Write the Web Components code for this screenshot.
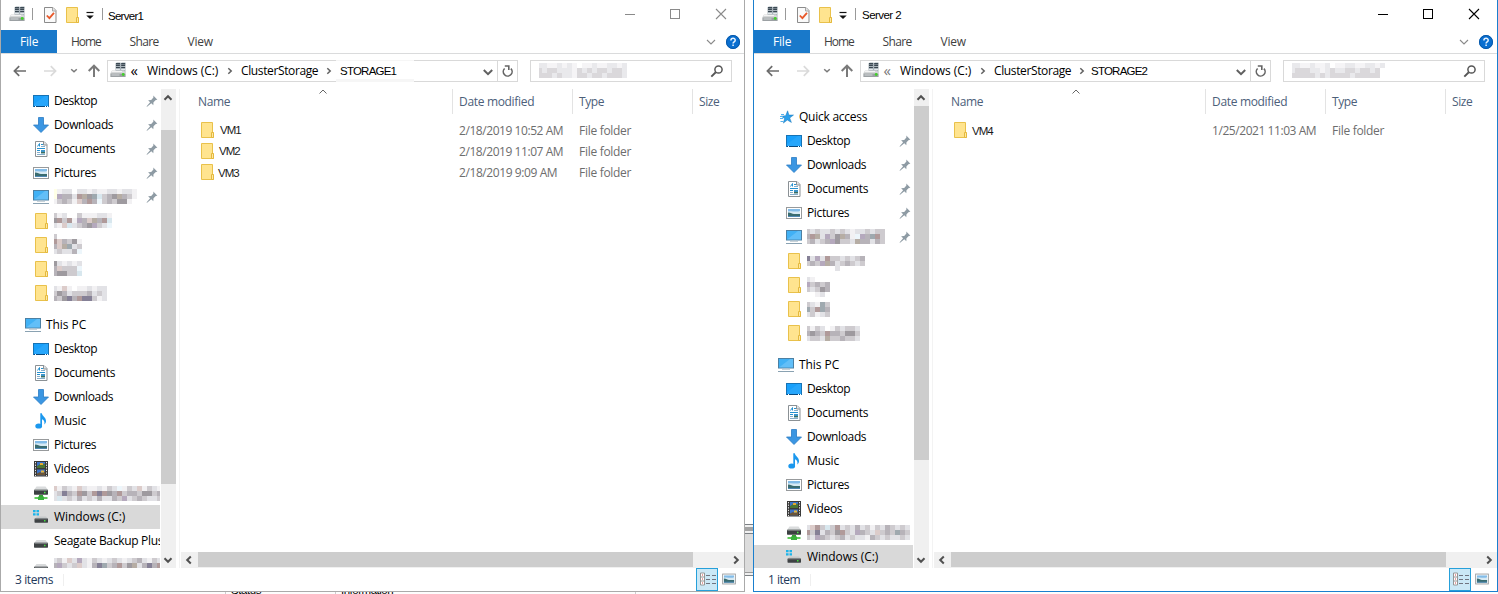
<!DOCTYPE html>
<html lang="en">
<head>
<meta charset="utf-8">
<title>File Explorer</title>
<style>
    body {
        margin: 0;
        width: 1498px;
        height: 594px;
        overflow: hidden;
        background: #fff;
        font: 12px/16px "Open Sans", "Noto Sans", sans-serif;
        color: #000;
    }
    .desktop {
        display: grid;
        grid-template-columns: 745px 8px 745px;
        grid-template-rows: 592px 2px;
    }
    window-strip { grid-column: 1 / 4; }
</style>
</head>
<body>
<div class="desktop">
    <explorer-window id="server1" caption="Server1" caption-width="35" folder="STORAGE1" items="3 items" items-width="38">
    </explorer-window>
    <window-gap></window-gap>
    <explorer-window id="server2" class="active" caption="Server 2" caption-width="39" folder="STORAGE2" items="1 item" items-width="32">
    </explorer-window>
    <window-strip></window-strip>
</div>

<script>
const ICONS = {
    server: `
        <path d="M5.500 1.200 7 .4h3.500v10h-5zM10.500 1.200 12 .4h3.500v10.500h-5z" fill="#a9b3ba"/>
        <path d="M6 1h4v1.600H6zM11.200 1h4v1.600h-4z" fill="#3c4a54"/>
        <path d="M6 3.500h3.900M6 5.500h3.900M11.200 3.500h3.900M11.200 5.500h3.900" stroke="#394650"/>
        <path d="M6 7.500h3.900M11.200 7.500h3.900" stroke="#e4e9ec"/>
        <path d="M2 8.500h12l1.500 2V15H.5v-4z" fill="#d5d7d8"/>
        <path d="M.5 11.500h15V15H.5z" fill="#9ba0a3"/>
        <path d="M2 9.500h10" stroke="#f4f4f4"/><path d="M1.500 13h8" stroke="#d6dadc"/>
        <circle cx="13.200" cy="12.500" r="1.400" fill="#42d02a"/>`,
    check: `
        <path d="M2.500.5h8.500l3 3v12H2.500z" fill="#fafafa" stroke="#8b8b8b"/>
        <path d="M10.500.5v3.500H14" fill="#e6e6e6" stroke="#a5a5a5"/>
        <path d="M4.800 8.500 7.400 11.200 12 5.800" fill="none" stroke="#e8582a" stroke-width="1.800"/>`,
    folder: `
        <path d="M2.500.5h11v10.300h.9v4.700H2.500z" fill="#ffe593" stroke="#e9c14b"/>
        <path d="M3 1h10v14H3z" fill="#ffe48f"/>
        <path d="M12.500 15.500V10.500h2v5z" fill="#ffe9a2" stroke="#e4b93e"/>`,
    desktop: `
        <rect x=".5" y="2.500" width="15" height="11" fill="#18a0fb" stroke="#1673b5"/>
        <path d="M1 11 12 3h3v10H1z" fill="#35acfc" opacity=".5"/>
        <path d="M1 13.500h14" stroke="#084a80"/><path d="M2 13.500h1M12 13.500h1M14 13.500h1" stroke="#fff"/>`,
    download: `<path d="M5.500.5h5v7.500h5L8 15.500.5 8h5z" fill="#3b96e2" stroke="#2b7cc4" stroke-width=".8"/>`,
    document: `
        <path d="M2.500.5h8.500l3 3v12H2.500z" fill="#fff" stroke="#8b9195"/>
        <path d="M10.500.5v3.500H14" fill="#e3e6e8" stroke="#8b9195"/>
        <path d="m4.500 5.500 2-3v3M8 3.500h2M4 7.500h8M4 9.500h3" fill="none" stroke="#2591d0"/>
        <path d="M4 11.500h3M4 13.500h8M8 5.500h4" stroke="#87aec9"/>
        <path d="M8 9h4v3.300H8z" fill="#3c93c8"/><path d="M8 11h4v1.300H8z" fill="#3d6e5f"/>`,
    picture: `
        <rect x=".5" y="2.500" width="15" height="11" fill="#fff" stroke="#979a9c"/>
        <path d="M2 4h12v8H2z" fill="#83bce8"/><path d="M2 6.500c4-1 8 1 12-.5v3H2z" fill="#d7eaf4"/>
        <path d="M2 7.500c3 0 4 1.500 6 1.500h6v3H2z" fill="#3a6c70"/><path d="M2 11h12v1H2z" fill="#4f88b4"/>`,
    monitor: `
        <rect x=".5" y="1.500" width="15" height="9.500" fill="#41b1f5" stroke="#4c80a3"/>
        <path d="M1 10.600 12 2h3v8.600z" fill="#7ecbfa" opacity=".55"/>
        <path d="M6 11.500h4v1H6z" fill="#b5c3cc"/><path d="M4 12.500h8" stroke="#c9d3d9"/>
        <path d="M0 14.500h16" stroke="#8aa2b2"/>`,
    music: `<ellipse cx="5.700" cy="13" rx="3.400" ry="2.600" fill="#1b98ee"/>
        <path d="M7.300 13V.3h1.500c.4 3 4.500 4 4.200 8-.1 1.800-1 2.700-1.700 3.300.6-2.600-.2-4.400-2.300-5.300V13z" fill="#1b98ee"/>`,
    video: `
        <rect x="1" width="14" height="15.500" fill="#3a3a3a"/>
        <path d="M4 1h8v6H4zM4 8.500h8v6H4z" fill="#3c73c8"/>
        <path d="M4 5.200 7 3l2 1 3-1.500V7H4z" fill="#4d7534"/><path d="M7 2h3v2H7z" fill="#e7a92f"/>
        <path d="M4 12.500 7 11l2 1 3-1.500v4H4z" fill="#6a5438"/><path d="M8 9.500h3v2H8z" fill="#e8b83c"/>
        <path d="M2.500 1v14M13.500 1v14" stroke="#e8e8e8" stroke-dasharray="1.300 1.300"/>`,
    drive: `
        <path d="M3.500 7h9l2.500 3.200H1z" fill="#d8dadb"/>
        <rect x="1" y="9.700" width="14" height="5" rx=".6" fill="#3e4244"/>
        <path d="M1.500 10.200h13" stroke="#8a8e90"/><path d="M11 12.500h1.500" stroke="#41e03b" stroke-width="1.400"/>`,
    netdrive: `
        <path d="M3.500 1.500h9L15 5H1z" fill="#dadcdd"/>
        <rect x="1" y="4.700" width="14" height="5" rx=".6" fill="#3c4042"/>
        <path d="M1.500 5.200h13" stroke="#8c9092"/><path d="M11 7.500h1.500" stroke="#4ee948" stroke-width="1.400"/>
        <path d="M6 10h4v2.500H6z" fill="#35a035"/><rect x="1.500" y="12" width="13" height="2" fill="#63cc5c"/>
        <rect x="5" y="11.500" width="6" height="3.500" fill="#3ab03d"/>`,
    windrive: `
        <path d="M0 1h2.600v2.300H0zM3.500 1H6v2.300H3.500zM0 4.200h2.600v2.300H0zM3.500 4.200H6v2.300H3.500z" fill="#1bb4ea"/>
        <path d="M4 7.500h9l2 2.500H1.500z" fill="#c5c8c9"/>
        <rect x="1.500" y="9.500" width="13.500" height="4.200" rx=".6" fill="#3e4244"/>
        <path d="M2 9.800h12.500" stroke="#84888a"/><path d="M11 11.800h1.500" stroke="#41e03b" stroke-width="1.400"/>`,
    star: `<path d="m9.600 1.800 1.300 4.300 4.600-.1-3.800 3 1.700 4.400-4.100-2.400-3.900 3.100 1.200-4.600-3.500-2.300 4.600-.5z" fill="#2b9fea" stroke="#1976bb" stroke-width=".5"/>
        <path d="M3 5.500h3M2 7.500h3M2 9.500h3M2.500 12.500h3" stroke="#55b1ec"/>`,
    pin: `<path d="m9.300 2.600 4.100 4.100-1.600.2-2.300 2.300-.2 3-2-1.900L3.400 13.600l-.8.3.3-.8 3.200-3.900-2-2 3.100-.3 2.200-2.300z" fill="#8e9ba4"/>`,
    back: `<path d="M14 8H2.500M7.200 3.200 2.400 8l4.800 4.800" fill="none" stroke="currentColor" stroke-width="1.700"/>`,
    forward: `<path d="M2 8h11.500M8.800 3.200 13.600 8l-4.800 4.800" fill="none" stroke="currentColor" stroke-width="1.700"/>`,
    up: `<path d="M8 14V2.800M2.700 8 8 2.700 13.300 8" fill="none" stroke="currentColor" stroke-width="2"/>`,
    down: `<path d="m5.200 6.200 2.800 2.600 2.800-2.600" fill="none" stroke="currentColor" stroke-width="1.500"/>`,
    expand: `<path d="m4 6 4 4 4-4" fill="none" stroke="currentColor" stroke-width="1.100"/>`,
    collapse: `<path d="m4.500 9.500 3.500-3.500 3.500 3.500" fill="none" stroke="currentColor"/>`,
    dropdown: `<path d="m3.800 6 4.200 4.200L12.200 6" fill="none" stroke="currentColor" stroke-width="2"/>`,
    right: `<path d="m6.300 5.300 2.900 2.700-2.900 2.700" fill="none" stroke="currentColor" stroke-width="1.500"/>`,
    refresh: `<path d="M4.600 5.500a4.400 4.400 0 1 0 6.300.1M4.800 3h4v4" fill="none" stroke="#646464" stroke-width="1.600"/>`,
    search: `<circle cx="9.500" cy="6.500" r="3.600" fill="none" stroke="#555" stroke-width="1.500"/><path d="m6.800 9.200-4.500 4.400" stroke="#555" stroke-width="1.900"/>`,
    customize: `<path d="M4.500 5.500h7" stroke="#111" stroke-width="1.200"/><path d="M4.300 8.500h7.400L8 12z" fill="#111"/>`,
    help: `<circle cx="8" cy="8" r="7" fill="#0a6fd0"/><circle cx="8" cy="8" r="6.500" fill="none" stroke="#0757a8"/>
        <path d="M5.900 6.400c0-3 4.400-2.800 4.300-.2 0 1.700-2.100 1.500-2.100 3.200M8.100 10.500v1.600" fill="none" stroke="#e8f3ff" stroke-width="1.500"/>`,
    minimize: `<path d="M3 8.500h10" stroke="currentColor"/>`,
    maximize: `<rect x="3.500" y="3.500" width="9" height="9" fill="none" stroke="currentColor"/>`,
    close: `<path d="m3 3 10 10M13 3 3 13" stroke="currentColor" stroke-width="1.100"/>`,
    arrowUp: `<path d="m4.500 9.800 3.500-3.600 3.500 3.600" fill="none" stroke="#505050" stroke-width="2"/>`,
    arrowDown: `<path d="m4.500 6.200 3.500 3.600 3.500-3.600" fill="none" stroke="#505050" stroke-width="2"/>`,
    arrowLeft: `<path d="M9.800 4.500 6.200 8l3.600 3.500" fill="none" stroke="#505050" stroke-width="2"/>`,
    arrowRight: `<path d="M6.200 4.500 9.800 8l-3.600 3.500" fill="none" stroke="#505050" stroke-width="2"/>`,
    details: `<path d="M.5 2h4v12h-4zM.5 6h4M.5 10h4" fill="#fff" stroke="#969696"/>
        <path d="M2 4h1M2 8h1M2 12h1" stroke="#d14040"/>
        <path d="M6 4.500h4M12 4.500h4M6 8.500h4M12 8.500h4M6 12.500h4M12 12.500h4" stroke="#707480"/>`
};

// palette for the censored blocks, one letter per cell
const SHADES = {
    a: '#f2f1f3', b: '#e2e2e6', c: '#cecbcf', d: '#b7b3b9', e: '#9e9a9f', f: '#dcccca', g: '#b09a9a',
    h: '#d8e7ee', i: '#9fa9af', j: '#ffffe6', k: '#858096', l: '#b6ada4', m: '#b5a9bd', n: '#edf6fb'
};

class UiIcon extends HTMLElement {
    connectedCallback() {
        if (this.shadowRoot) return;
        this.attachShadow({ mode: 'open' });
        this.shadowRoot.innerHTML = `
            <style>
                :host { display: block; flex: none; width: 16px; height: 16px; }
                svg { display: block; width: 16px; height: 16px; overflow: visible; }
            </style>
            <svg viewBox="0 0 16 16">${ICONS[this.getAttribute('name')]}</svg>
        `;
    }
}

// Label whose letter spacing is adjusted until it is as wide as the "w" attribute
class FitText extends HTMLElement {
    connectedCallback() {
        if (this.shadowRoot) return;
        this.attachShadow({ mode: 'open' });
        this.shadowRoot.innerHTML = `
            <style>
                :host { display: block; flex: none; white-space: nowrap; }
                span { display: inline-block; }
            </style>
            <span><slot></slot></span>
        `;
        const span = this.shadowRoot.querySelector('span');
        const width = Number(this.getAttribute('w'));
        const natural = span.getBoundingClientRect().width;
        const count = this.textContent.length;
        this.style.width = width + 'px';
        span.style.letterSpacing = (width + 0.2 - natural) / count + 'px';
    }
}

class MosaicBlock extends HTMLElement {
    connectedCallback() {
        if (this.shadowRoot) return;
        this.attachShadow({ mode: 'open' });
        const rows = this.getAttribute('cells').split('/');
        this.shadowRoot.innerHTML = `
            <style>
                :host { display: block; flex: none; }
                .row { display: flex; height: 5px; }
                .row:first-child { height: var(--first, 4px); }
                i { width: 5px; flex: none; }
                i:first-child { width: 3px; }
            </style>
            ${rows.map(row => `<div class="row">${[...row].map(c =>
                `<i style="background:${SHADES[c] || 'transparent'}"></i>`).join('')}</div>`).join('')}
        `;
    }
}

class NavItem extends HTMLElement {
    connectedCallback() {
        if (this.shadowRoot) return;
        this.attachShadow({ mode: 'open' });
        this.shadowRoot.innerHTML = `
            <style>
                :host {
                    display: flex;
                    align-items: center;
                    box-sizing: border-box;
                    flex: none;
                    height: 24px;
                    padding-left: 32px;
                    gap: 5px;
                }
                :host([root]) { padding-left: 24px; }
                :host([spaced]) { margin-top: 8px; }
                :host([selected]) { background: #d9d9d9; }
                .pin { margin-left: auto; margin-right: 0; }
            </style>
            <ui-icon name="${this.getAttribute('icon')}"></ui-icon>
            <slot></slot>
            ${this.hasAttribute('pinned') ? '<ui-icon class="pin" name="pin"></ui-icon>' : ''}
        `;
    }
}

class FileRow extends HTMLElement {
    connectedCallback() {
        if (this.shadowRoot) return;
        this.attachShadow({ mode: 'open' });
        const get = name => this.getAttribute(name);
        this.shadowRoot.innerHTML = `
            <style>
                :host { display: grid; grid-template-columns: 260px 120px 120px; height: 21px; color: #6d6d6d; }
                .name {
                    display: flex;
                    align-items: center;
                    font-family: "Liberation Sans", sans-serif;
                    font-size: 11.5px;
                    color: #1a1a1a;
                    height: 18px;
                }
                .cell { padding-top: 2px; }
                .name fit-text { margin: ${get('drop') || 0}px 0 0 ${get('indent')}px; }
            </style>
            <div class="name"><ui-icon name="folder"></ui-icon><fit-text w="20.5">${get('name')}</fit-text></div>
            <div class="cell"><fit-text w="${get('date-width')}">${get('date')}</fit-text></div>
            <div class="cell"><fit-text w="52">File folder</fit-text></div>
        `;
    }
}

class ScrollBar extends HTMLElement {
    connectedCallback() {
        if (this.shadowRoot) return;
        this.attachShadow({ mode: 'open' });
        const flat = this.hasAttribute('horizontal');
        this.shadowRoot.innerHTML = `
            <style>
                :host { display: flex; flex-direction: ${flat ? 'row' : 'column'}; background: #f0f0f0; }
                .thumb { background: #cdcdcd; flex: none; margin: ${flat ? '0 auto 1px 0' : '0 0 auto'};
                    ${flat ? 'width' : 'height'}: ${this.getAttribute('thumb')}px; }
                .lead { flex: none; width: ${flat ? 17 : 15}px; height: ${this.getAttribute('lead') || 16}px; }
                ui-icon { margin: ${flat ? 0 : '1px 0 0 -1px'}; }
                .end { margin: ${flat ? '0' : '0 0 0 -1px'}; }
            </style>
            <div class="lead"><ui-icon name="${flat ? 'arrowLeft' : 'arrowUp'}"></ui-icon></div>
            <div class="thumb"></div>
            <ui-icon class="end" name="${flat ? 'arrowRight' : 'arrowDown'}"></ui-icon>
        `;
    }
}

class ExplorerWindow extends HTMLElement {
    constructor() {
        super();
        this.attachShadow({ mode: 'open' });
        const get = name => this.getAttribute(name);
        const first = this.id === 'server1';
        this.shadowRoot.innerHTML = `
            <style>
                :host {
                    display: flex;
                    flex-direction: column;
                    box-sizing: border-box;
                    width: 745px;
                    height: 592px;
                    background: #fff;
                    border: 1px solid #aaa;
                    border-top: 0;
                    --glyph: #8a8a8a;
                }
                :host(.active) { border-color: #1a7fce; --glyph: #000; }
                .plain { font-family: "Liberation Sans", sans-serif; font-size: 11.5px; }
                .title { display: flex; align-items: center; height: 28px; padding: 0 0 2px 8px; }
                .title .rule { width: 1px; height: 12px; background: #999; margin-left: 7px; }
                .title .sheet { margin: 2px 0 0 9px; }
                .title .dir { margin: 2px 0 0 6px; }
                .title .more { margin: 2px -4px 0 2px; }
                .title .more + .rule { margin-left: 8px; }
                .title fit-text { margin: ${first ? '3px 0 0 5px' : '1px 0 0 6px'}; }
                .controls { display: flex; margin-left: auto; color: var(--glyph); }
                .controls ui-icon { padding: 0 15px; }
                .controls ui-icon:nth-child(2) { padding: 0 15px 0 14px; }
                .tabs { display: flex; align-items: center; height: 23px; border-bottom: 1px solid #dadbdc; color: #3f3f3f; }
                .tabs .file { box-sizing: border-box; width: 56px; height: 23px; padding: 4px 0 0 19px; background: #1979ca; color: #fff; }
                .tabs .tab { margin-left: 14px; padding-right: 15px; }
                .tabs .expand { margin-left: auto; color: #8a8a8a; }
                .tabs .help { margin: 0 3px 0 6px; }
                .address { display: flex; height: 35px; padding: 6px 12px 0 11px; box-sizing: border-box; }
                .address > ui-icon { margin-top: 3px; }
                .box { display: flex; align-items: center; box-sizing: border-box; height: 22px; border: 1px solid #d9d9d9; color: #606060; }
                .path { width: 411px; margin-left: 5px; padding-left: 2px; }
                .path fit-text { color: #000; }
                .path .last {
                    box-sizing: border-box;
                    padding: ${first ? '2px 0 0 4px' : '3px 0 0 2px'};
                    width: 78px;
                    height: 22px;
                    ${first ? 'background: #fff; border: solid #f6f6f6; border-width: 1px 0 3px;' : ''}
                }
                .refresh { display: flex; align-items: center; height: 20px; width: 20px; border-left: 1px solid #d9d9d9; padding-left: 2px; box-sizing: border-box; }
                .search { width: 202px; margin-left: 12px; padding: 0 6px 0 8px; justify-content: space-between; }
                .search mosaic-block { opacity: .75; }
                .body { display: grid; grid-template-columns: 159px 1px 15px 4px 564px; height: 479px; }
                .nav { display: flex; flex-direction: column; overflow: hidden; height: 479px; padding-top: ${first ? 0 : 16}px; box-sizing: border-box; }
                scroll-bar.v { grid-column: 3; height: 479px; }
                .list { display: flex; flex-direction: column; border-left: 1px solid #f3f3f3; margin-left: -1px; height: 479px; }
                .heads { display: flex; height: 24px; color: #4c607a; padding-left: 18px; }
                .heads div { display: flex; align-items: center; border-right: 1px solid #e3e3e3; box-sizing: border-box; height: 25px; padding-top: 1px; }
                .heads .name { width: 255px; }
                .heads .sort { margin: -20px 0 0 84.5px; color: #666; }
                .heads .cell { width: 120px; padding-left: 6px; }
                .heads .size { border: 0; padding-left: 6px; }
                .files { padding: 8px 0 0 19px; flex: 1; }
                .status { display: flex; height: 23px; align-items: center; color: #1e395b; padding-left: 14px; }
                .status .rule { width: 1px; height: 12px; background: #efefef; margin-left: 10px; }
                .view {
                    display: flex;
                    align-items: center;
                    justify-content: center;
                    box-sizing: border-box;
                    width: 22px;
                    height: 23px;
                    margin-left: auto;
                    border: 1px solid #26a0da;
                    background: #cbe8f6;
                }
                .view ui-icon { margin: -1px 0 0 1px; }
                .thumbs { margin: -2px 7px 0 3px; transform: scale(.85, .9); }
            </style>
            <div class="title">
                <ui-icon name="server"></ui-icon>
                <div class="rule"></div>
                <ui-icon class="sheet" name="check"></ui-icon>
                <ui-icon class="dir" name="folder"></ui-icon>
                <ui-icon class="more" name="customize"></ui-icon>
                <div class="rule"></div>
                <fit-text class="plain" w="${get('caption-width')}">${get('caption')}</fit-text>
                <div class="controls">
                    <ui-icon name="minimize"></ui-icon>
                    <ui-icon name="maximize"></ui-icon>
                    <ui-icon name="close"></ui-icon>
                </div>
            </div>
            <div class="tabs">
                <div class="file"><fit-text w="18">File</fit-text></div>
                <fit-text class="tab" w="29.500">Home</fit-text>
                <fit-text class="tab" w="29">Share</fit-text>
                <fit-text class="tab" w="25">View</fit-text>
                <ui-icon class="expand" name="expand"></ui-icon>
                <ui-icon class="help" name="help"></ui-icon>
            </div>
            <div class="address">
                <ui-icon name="back" style="color: #6c6c6c"></ui-icon>
                <ui-icon name="forward" style="color: #dadada; margin-left: 14px"></ui-icon>
                <ui-icon name="down" style="color: #7a7a7a; margin-left: 7.500px"></ui-icon>
                <ui-icon name="up" style="color: #7a7a7a; margin-left: 4.500px"></ui-icon>
                <div class="box path">
                    <ui-icon name="server" style="margin-top: -2px"></ui-icon>
                    <fit-text w="8.500" style="margin: -3px 0 0 4.500px; font-size: 15px; ${first ? '' : 'color: #777'}">«</fit-text>
                    <fit-text w="71" style="margin: -1px 0 0 8px">Windows (C:)</fit-text>
                    <ui-icon name="right" style="margin-left: 4px"></ui-icon>
                    <fit-text w="77" style="margin: -1px 0 0 3px">ClusterStorage</fit-text>
                    <ui-icon name="right" style="margin-left: 3px"></ui-icon>
                    <div class="last plain" style="margin-left: -1px"><fit-text w="56">${get('folder')}</fit-text></div>
                    <ui-icon name="dropdown" style="margin: 1px 1px 0 auto"></ui-icon>
                    <div class="refresh"><ui-icon name="refresh"></ui-icon></div>
                </div>
                <div class="box search">
                    <mosaic-block style="margin-top: -2px; ${first ? '' : '--first: 0px'}" cells="${first
                        ? 'bbaababa.aabaabbab/cbccbbbacbcbccbccb/cccbcbbaccbccbcccb'
                        : 'bbaabaab.aabbaabbab/bcccbbabcbbccbccbc/cccccbcbccccbccccc'}"></mosaic-block>
                    <ui-icon name="search"></ui-icon>
                </div>
            </div>
            <div class="body">
                <div class="nav"><slot name="nav"></slot></div>
                <scroll-bar class="v" lead="${first ? 41 : 17}" thumb="354"></scroll-bar>
                <div></div>
                <div class="list" style="grid-column: 5">
                    <div class="heads">
                        <div class="name"><fit-text w="32">Name</fit-text><ui-icon class="sort" name="collapse"></ui-icon></div>
                        <div class="cell"><fit-text w="75">Date modified</fit-text></div>
                        <div class="cell"><fit-text w="25">Type</fit-text></div>
                        <div class="size"><fit-text w="20">Size</fit-text></div>
                    </div>
                    <div class="files"><slot name="file"></slot></div>
                    <scroll-bar horizontal thumb="495" style="height: 16px; margin-left: 1px"></scroll-bar>
                </div>
            </div>
            <div class="status">
                <fit-text w="${get('items-width')}">${get('items')}</fit-text>
                <div class="rule"></div>
                <div class="view"><ui-icon name="details"></ui-icon></div>
                <ui-icon class="thumbs" name="picture"></ui-icon>
            </div>
        `;
    }
}

// slice of the window behind, seen between the two explorers
class WindowGap extends HTMLElement {
    constructor() {
        super();
        this.attachShadow({ mode: 'open' });
        this.shadowRoot.innerHTML = `
            <style>
                :host { display: flex; flex-direction: column; padding-top: 524px; }
                .line { height: 1px; background: #7c8084; }
                .light { height: 2px; background: #f0f0f0; }
                .bar { height: 4px; background: #a3a3a3; }
                .panel { height: 38px; background: #dcdcdc; border-bottom: 1px solid #999; }
            </style>
            <div class="line"></div><div class="light"></div><div class="bar"></div>
            <div class="light"></div><div class="line"></div><div class="panel"></div>
            <div class="light"></div><div class="line"></div>
        `;
    }
}

// bottom edge of the list header of the window behind
class WindowStrip extends HTMLElement {
    constructor() {
        super();
        this.attachShadow({ mode: 'open' });
        this.shadowRoot.innerHTML = `
            <style>
                :host { display: flex; align-items: flex-end; height: 2px; overflow: hidden; background: #fdfdfd; padding-left: 225px; }
                div { display: flex; align-items: flex-end; box-sizing: border-box; height: 2px; border-left: 1px solid #ccc; padding-left: 5px; }
                fit-text { margin-bottom: -4px; font: 11.5px/16px "Liberation Sans", sans-serif; }
            </style>
            <div style="width: 110px"><fit-text w="30">Status</fit-text></div>
            <div style="width: 300px"><fit-text w="52">Information</fit-text></div>
            <div></div>
        `;
    }
}

const text = (label, width) => `<fit-text w="${width}" style="margin-top: -1px">${label}</fit-text>`;
const item = (icon, content, attrs = '') => `<nav-item slot="nav" icon="${icon}" ${attrs}>${content}</nav-item>`;
const blur = (cells, style = '') => `<mosaic-block cells="${cells}" style="${style}"></mosaic-block>`;

const quick = blocks =>
    item('desktop', text('Desktop', 43), 'pinned') +
    item('download', text('Downloads', 59), 'pinned') +
    item('document', text('Documents', 61), 'pinned') +
    item('picture', text('Pictures', 42), 'pinned') +
    item('monitor', blocks[0], 'pinned') +
    blocks.slice(1, 5).map(block => item('folder', block)).join('');

const computer = net =>
    item('monitor', text('This PC', 40), 'root spaced') +
    item('desktop', text('Desktop', 43)) +
    item('document', text('Documents', 61)) +
    item('download', text('Downloads', 59)) +
    item('music', text('Music', 32)) +
    item('picture', text('Pictures', 42)) +
    item('video', text('Videos', 35)) +
    item('netdrive', net) +
    item('windrive', text('Windows (C:)', 71), 'selected');

const file = (name, indent, drop, date, width) =>
    `<file-row slot="file" name="${name}" indent="${indent}" drop="${drop}" date="${date}" date-width="${width}"></file-row>`;

document.getElementById('server1').innerHTML =
    quick([
        blur('jabb.bbabaabbabba/jmddbgleihcdeldca/acdcafdgdncdceea', 'margin-top: -1px'),
        blur('cab..caaabba/egcgamdfldgh/bafhbcdemcbn', 'margin-top: -2px'),
        blur('c/gfdcea/dflibc/bcbbdn', 'margin-top: -2px; --first: 3px'),
        blur('ebabab/dfcccn/deecch', 'margin-top: -2px'),
        blur('bafa.aababb/cedbcccdbcb/dcekdgkkcab', 'margin-top: 1px')
    ]) +
    computer(blur('facbafbaabacbnacbfacba/bckdcgecgkgedgcddceecd/bhbcbdbcbdbbdcmbcdcbbc')) +
    item('drive', text('Seagate Backup Plus', 109)) +
    item('drive', blur('bcafbmbacbabcbabcdbacb/dmcbcfbadkicdgcelbdkdg/cdbcacbcdbcabcdbabcb')) +
    file('VM1', 5, 0, '2/18/2019 10:52 AM', 104) +
    file('VM2', 4, 0, '2/18/2019 11:07 AM', 104) +
    file('VM3', 3, 2, '2/18/2019 9:09 AM', 98);

document.getElementById('server2').innerHTML =
    item('star', text('Quick access', 68), 'root') +
    quick([
        blur('cbcbbcbcbabbcbcc/dglbmceldanmdigc/cdbcdmeccblddbdc', 'margin-top: -2px'),
        blur('kbmbgccbcbcd/cdcmldbcdcbc/      b', 'margin-top: 4px; --first: 5px'),
        blur('ba/mcdcd/cbced/  ab', 'margin-top: 3px'),
        blur('cbaic/icgid/bcabc', 'margin-top: 0'),
        blur('cacb.acbccb/dedcgddceec/bccblccdccb', 'margin-top: 1px')
    ]) +
    computer(blur('bfgchcgbcbdbcacbdcbcb/gckbdcegcbmdcbfcdcidc/cbmdcbcdbcbbadcbcbbcb', 'margin-top: -1px')) +
    file('VM4', 4, 2, '1/25/2021 11:03 AM', 104);

customElements.define('ui-icon', UiIcon);
customElements.define('fit-text', FitText);
customElements.define('mosaic-block', MosaicBlock);
customElements.define('scroll-bar', ScrollBar);
customElements.define('nav-item', NavItem);
customElements.define('file-row', FileRow);
customElements.define('explorer-window', ExplorerWindow);
customElements.define('window-gap', WindowGap);
customElements.define('window-strip', WindowStrip);
</script>
</body>
</html>
